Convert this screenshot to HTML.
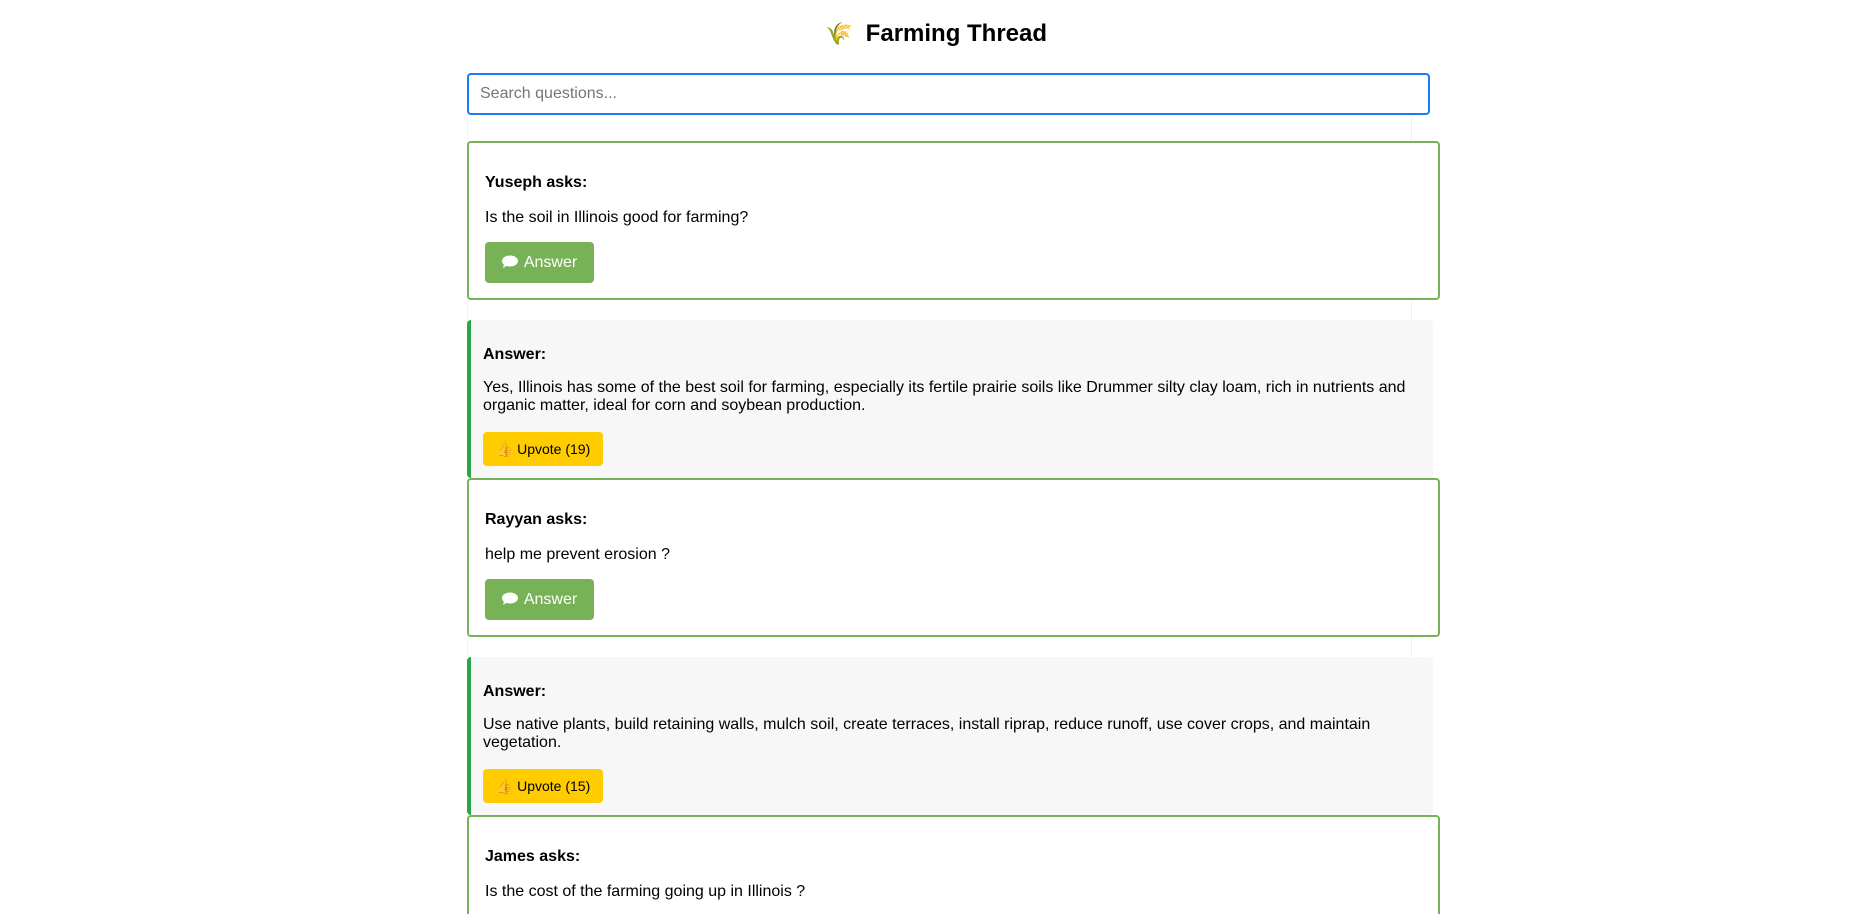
<!DOCTYPE html>
<html><head><meta charset="utf-8"><style>
html,body{margin:0;overflow:hidden;height:914px}
body{background:#fff;font-family:"Liberation Sans",Arial,sans-serif;color:#000}
#w{position:relative;width:1876px;height:914px;overflow:hidden}
h1{position:absolute;top:18px;left:-2px;width:1876px;text-align:center;margin:0;font-size:24px;font-weight:bold;line-height:32px}
.search{position:absolute;left:467px;top:73px;border:2px solid #1a7cf0;border-radius:4px;font-size:16px;color:#757575;line-height:38px;padding-left:11px;box-sizing:border-box;width:963px;height:42px}
.cont{position:absolute;left:467px;top:118px;width:943px;height:800px;border-right:1px solid #f0f0f0;border-left:1px solid #f4f4f4}
.q{position:absolute;left:467px;width:973px;height:159px;border:2px solid #78b257;border-radius:4px;box-sizing:border-box;background:#fff}
.q .n{position:absolute;left:16px;top:31px;font-weight:bold;font-size:16px}
.q .t{position:absolute;left:16px;top:66px;font-size:16px}
.btn{position:absolute;left:16px;top:99px;width:109px;height:41px;background:#78b257;border-radius:4px;color:#fff;font-size:16px;line-height:41px;text-align:center}
.btn svg{vertical-align:-2px;margin-right:6px}
.a{position:absolute;left:467px;width:966px;height:158px;background:#f7f7f7;border-left:4px solid #28a745;border-radius:4px;box-sizing:border-box}
.a .n{position:absolute;left:12px;top:26px;font-weight:bold;font-size:16px}
.a .t{position:absolute;left:12px;top:59px;font-size:16px;line-height:18px;width:940px}
.up{position:absolute;left:12px;top:112px;width:120px;height:34px;background:#ffcc00;border-radius:4px;font-size:14px;line-height:34px;text-align:center}
</style></head><body><div id="w">
<h1><span style="font-size:22px;color:#e0a020">🌾</span>&nbsp; Farming Thread</h1>
<div class="cont"></div>
<div class="search">Search questions...</div>
<div class="q" style="top:141px"><div class="n">Yuseph asks:</div><div class="t">Is the soil in Illinois good for farming?</div><div class="btn"><svg width="16" height="14" viewBox="0 0 16 14"><ellipse cx="8" cy="6" rx="8" ry="5.5" fill="#fff"/><path d="M2 9 L1 13 L6 10Z" fill="#fff"/></svg>Answer</div></div>
<div class="a" style="top:320px"><div class="n">Answer:</div><div class="t">Yes, Illinois has some of the best soil for farming, especially its fertile prairie soils like Drummer silty clay loam, rich in nutrients and organic matter, ideal for corn and soybean production.</div><div class="up">👍 Upvote (19)</div></div>
<div class="q" style="top:478px"><div class="n">Rayyan asks:</div><div class="t">help me prevent erosion ?</div><div class="btn"><svg width="16" height="14" viewBox="0 0 16 14"><ellipse cx="8" cy="6" rx="8" ry="5.5" fill="#fff"/><path d="M2 9 L1 13 L6 10Z" fill="#fff"/></svg>Answer</div></div>
<div class="a" style="top:657px"><div class="n">Answer:</div><div class="t">Use native plants, build retaining walls, mulch soil, create terraces, install riprap, reduce runoff, use cover crops, and maintain vegetation.</div><div class="up">👍 Upvote (15)</div></div>
<div class="q" style="top:815px"><div class="n">James asks:</div><div class="t">Is the cost of the farming going up in Illinois ?</div><div class="btn"><svg width="16" height="14" viewBox="0 0 16 14"><ellipse cx="8" cy="6" rx="8" ry="5.5" fill="#fff"/><path d="M2 9 L1 13 L6 10Z" fill="#fff"/></svg>Answer</div></div>
</div></body></html>
